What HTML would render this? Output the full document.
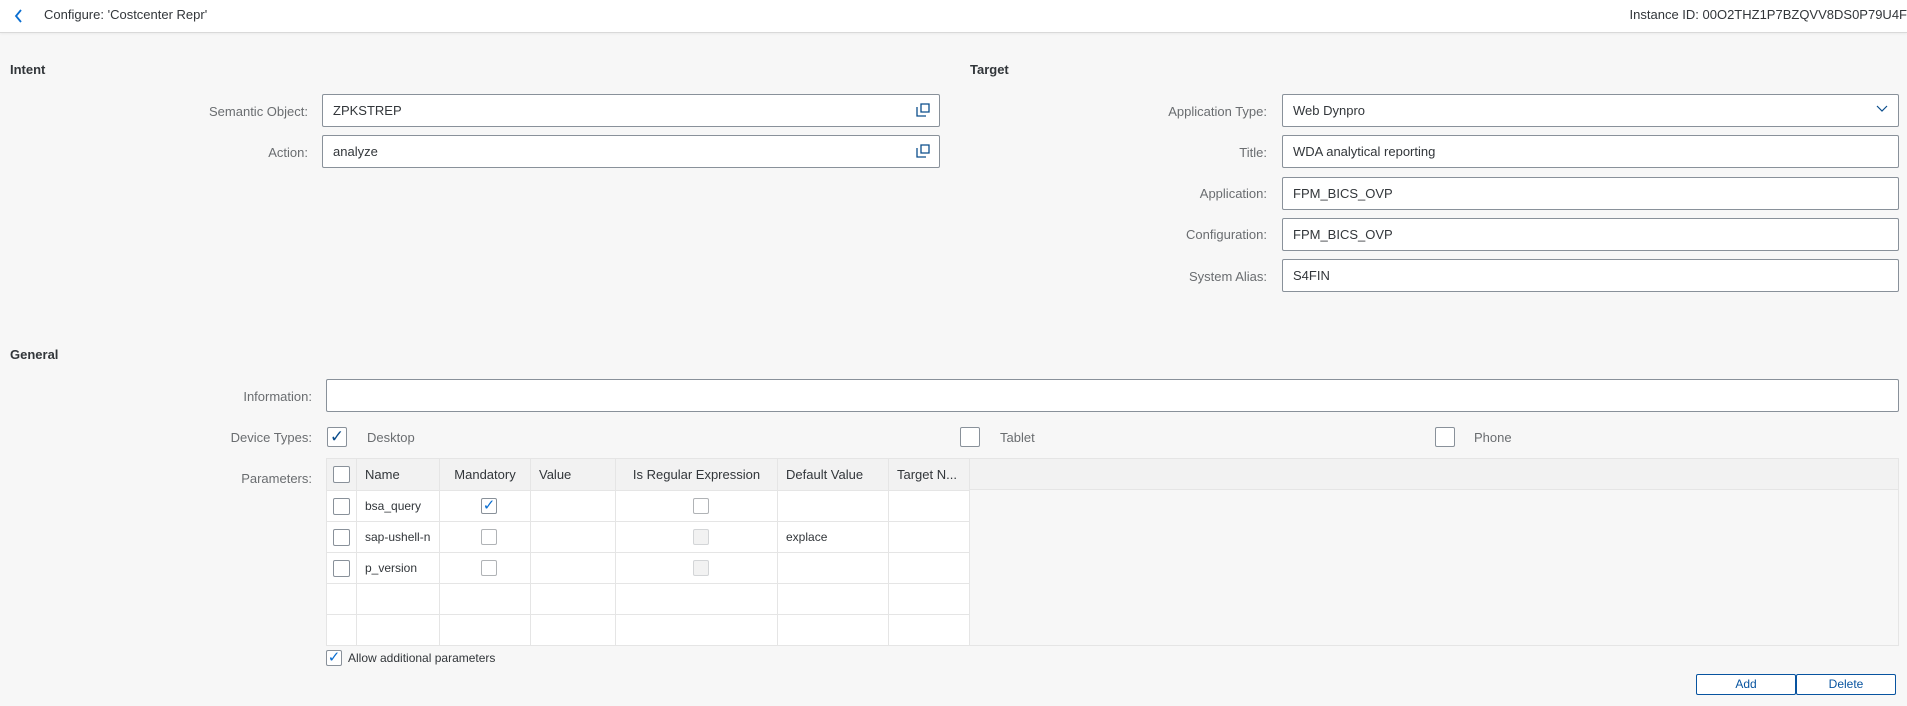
<!DOCTYPE html>
<html><head><meta charset="utf-8"><style>
*{box-sizing:border-box;margin:0;padding:0}
body{width:1907px;height:706px;background:#f7f7f7;font-family:"Liberation Sans",sans-serif;color:#32363a;position:relative;overflow:hidden;font-size:13px}
.a{position:absolute}
.hdr{left:0;top:0;width:1907px;height:33px;background:#fff;border-bottom:1px solid #d9d9d9;box-shadow:0 1px 2px rgba(0,0,0,.05)}
.h{font-weight:bold;font-size:13px;color:#32363a}
.lbl{text-align:right;color:#6a6d70;font-size:13px;width:300px;line-height:20px}
.inp{background:#fff;border:1px solid #89919a;border-radius:2px;height:33px;padding-left:10px;line-height:31px;font-size:13px;color:#32363a}
.cb{width:20px;height:20px;border:1px solid #89919a;border-radius:2px;background:#fff}
.cbs{width:16px;height:16px;border:1px solid #89919a;border-radius:2px;background:#fff}
.cbd{width:16px;height:16px;border:1px solid #d3d5d7;border-radius:2px;background:#f2f2f2}
.btn{background:#fff;border:1px solid #0854a0;border-radius:2px;color:#0854a0;text-align:center;font-size:12px;line-height:19px;height:21px}
table{border-collapse:collapse;position:absolute;left:326px;top:458px}
td{border:1px solid #e5e5e5;height:31px;font-size:12px;padding-left:8px;background:#fff;vertical-align:middle}
th{border:1px solid #e5e5e5;height:32px;background:#f2f2f2;font-weight:normal;text-align:left;font-size:13px;padding-left:8px;color:#32363a}
.chk{color:#0a6ed1;font-size:15px;line-height:14px;text-align:center}
</style></head><body>
<div class="a hdr"></div>
<svg class="a" style="left:14px;top:8px" width="10" height="16" viewBox="0 0 10 16"><path d="M7 2L2 8l5 6" stroke="#0a6ed1" stroke-width="1.8" fill="none"/></svg>
<div class="a" style="left:44px;top:7px;font-size:13px;color:#32363a">Configure: 'Costcenter Repr'</div>
<div class="a" style="right:0;top:7px;font-size:13px;color:#32363a">Instance ID: 00O2THZ1P7BZQVV8DS0P79U4F</div>

<div class="a h" style="left:10px;top:62px">Intent</div>
<div class="a h" style="left:970px;top:62px">Target</div>
<div class="a lbl" style="left:8px;top:102px">Semantic Object:</div>
<div class="a inp" style="left:322px;top:94px;width:618px">ZPKSTREP</div>
<div class="a lbl" style="left:8px;top:143px">Action:</div>
<div class="a inp" style="left:322px;top:135px;width:618px">analyze</div>
<svg class="a" style="left:916px;top:103px" width="14" height="14" viewBox="0 0 14 14"><path d="M1 4v9h9M5 1h8v8H5z" stroke="#0a4d8c" stroke-width="1.3" fill="none"/></svg>
<svg class="a" style="left:916px;top:144px" width="14" height="14" viewBox="0 0 14 14"><path d="M1 4v9h9M5 1h8v8H5z" stroke="#0a4d8c" stroke-width="1.3" fill="none"/></svg>

<div class="a lbl" style="left:967px;top:102px">Application Type:</div>
<div class="a inp" style="left:1282px;top:94px;width:617px">Web Dynpro</div>
<svg class="a" style="left:1876px;top:105px" width="12" height="8" viewBox="0 0 12 8"><path d="M1 1l5 5 5-5" stroke="#0a4d8c" stroke-width="1.2" fill="none"/></svg>
<div class="a lbl" style="left:967px;top:143px">Title:</div>
<div class="a inp" style="left:1282px;top:135px;width:617px">WDA analytical reporting</div>
<div class="a lbl" style="left:967px;top:184px">Application:</div>
<div class="a inp" style="left:1282px;top:177px;width:617px">FPM_BICS_OVP</div>
<div class="a lbl" style="left:967px;top:225px">Configuration:</div>
<div class="a inp" style="left:1282px;top:218px;width:617px">FPM_BICS_OVP</div>
<div class="a lbl" style="left:967px;top:267px">System Alias:</div>
<div class="a inp" style="left:1282px;top:259px;width:617px">S4FIN</div>

<div class="a h" style="left:10px;top:347px">General</div>
<div class="a lbl" style="left:12px;top:387px">Information:</div>
<div class="a inp" style="left:326px;top:379px;width:1573px"></div>
<div class="a lbl" style="left:12px;top:428px">Device Types:</div>
<div class="a cb chk" style="left:327px;top:427px;font-size:17px;line-height:18px;color:#0a4d8c">✓</div>
<div class="a" style="left:367px;top:430px;color:#6a6d70">Desktop</div>
<div class="a cb" style="left:960px;top:427px"></div>
<div class="a" style="left:1000px;top:430px;color:#6a6d70">Tablet</div>
<div class="a cb" style="left:1435px;top:427px"></div>
<div class="a" style="left:1474px;top:430px;color:#6a6d70">Phone</div>
<div class="a lbl" style="left:12px;top:469px">Parameters:</div>

<div class="a" style="left:326px;top:458px;width:1573px;height:188px;border:1px solid #e5e5e5;background:#f7f7f7"></div>
<div class="a" style="left:326px;top:458px;width:1573px;height:32px;background:#f2f2f2;border:1px solid #e5e5e5"></div>
<table>
<tr><th style="width:30px;padding-left:6px"><div class="cb" style="width:17px;height:17px"></div></th><th style="width:83px">Name</th><th style="width:91px;text-align:center;padding:0">Mandatory</th><th style="width:85px">Value</th><th style="width:162px;text-align:center;padding:0">Is Regular Expression</th><th style="width:111px">Default Value</th><th style="width:81px">Target N...</th></tr>
<tr><td style="padding-left:6px"><div class="cb" style="width:17px;height:17px"></div></td><td>bsa_query</td><td><div class="cbs chk" style="margin:auto">✓</div></td><td></td><td><div class="cbs" style="margin:auto;border-color:#b0b3b6"></div></td><td></td><td></td></tr>
<tr><td style="padding-left:6px"><div class="cb" style="width:17px;height:17px"></div></td><td style="overflow:hidden;white-space:nowrap;max-width:83px">sap-ushell-n</td><td><div class="cbs" style="margin:auto;border-color:#b0b3b6"></div></td><td></td><td><div class="cbd" style="margin:auto"></div></td><td>explace</td><td></td></tr>
<tr><td style="padding-left:6px"><div class="cb" style="width:17px;height:17px"></div></td><td>p_version</td><td><div class="cbs" style="margin:auto;border-color:#b0b3b6"></div></td><td></td><td><div class="cbd" style="margin:auto"></div></td><td></td><td></td></tr>
<tr><td></td><td></td><td></td><td></td><td></td><td></td><td></td></tr>
<tr><td></td><td></td><td></td><td></td><td></td><td></td><td></td></tr>
</table>
<div class="a cbs chk" style="left:326px;top:650px;color:#0a6ed1">✓</div>
<div class="a" style="left:348px;top:651px;font-size:12px">Allow additional parameters</div>
<div class="a btn" style="left:1696px;top:674px;width:100px">Add</div>
<div class="a btn" style="left:1796px;top:674px;width:100px">Delete</div>
</body></html>
